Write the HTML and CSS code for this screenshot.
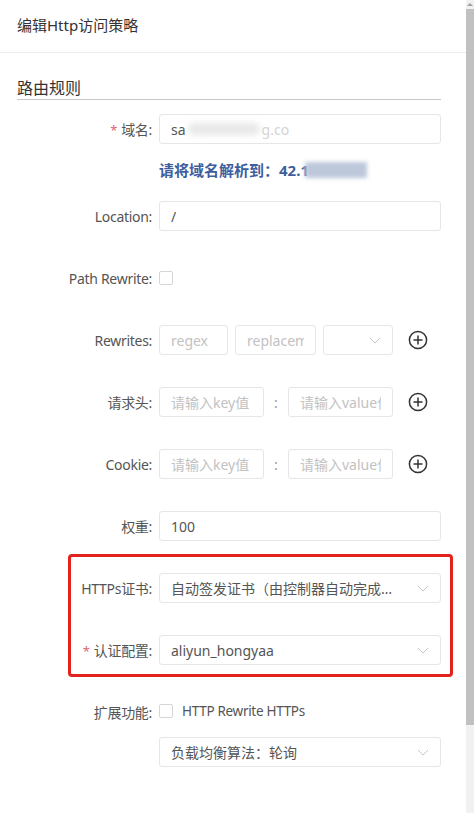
FILE: index.html
```html
<!DOCTYPE html>
<html lang="zh-CN">
<head>
    <meta charset="UTF-8">
    <meta name="viewport" content="width=device-width, initial-scale=1.0">
    <title>编辑Http访问策略</title>
    <link rel="stylesheet" href="styles.css">
</head>
<body>
    <div class="page">
        <div class="dialog">
            <!-- Header -->
            <header class="dialog-header">
                <h1 class="dialog-title">编辑Http访问策略</h1>
            </header>

            <!-- Route rules -->
            <h2 class="section-title">路由规则</h2>

            <form class="form">
                <div class="form-row">
                    <label class="form-label"><span class="required">*</span>域名:</label>
                    <div class="input">
                        <span class="value">sa</span><span class="masked"></span><span class="faint">g.co</span>
                    </div>
                </div>
                <div class="form-hint">请将域名解析到：42.1<span class="ip-mask"></span></div>

                <div class="form-row">
                    <label class="form-label">Location:</label>
                    <div class="input"><span class="value">/</span></div>
                </div>

                <div class="form-row">
                    <label class="form-label">Path Rewrite:</label>
                    <span class="checkbox"></span>
                </div>

                <div class="form-row">
                    <label class="form-label">Rewrites:</label>
                    <div class="input input-regex"><span class="placeholder">regex</span></div>
                    <div class="input input-replace"><span class="placeholder">replacement</span></div>
                    <div class="input select input-flag">
                        <span class="placeholder"></span>
                        <svg class="chevron" viewBox="0 0 12 7"><path d="M1 1l5 5 5-5"/></svg>
                    </div>
                    <svg class="add-btn" viewBox="0 0 20 20"><circle cx="10" cy="10" r="8.6"/><path d="M10 5.5v9M5.5 10h9"/></svg>
                </div>

                <div class="form-row">
                    <label class="form-label">请求头:</label>
                    <div class="input input-pair"><span class="placeholder">请输入key值</span></div>
                    <span class="pair-sep">:</span>
                    <div class="input input-pair"><span class="placeholder">请输入value值</span></div>
                    <svg class="add-btn" viewBox="0 0 20 20"><circle cx="10" cy="10" r="8.6"/><path d="M10 5.5v9M5.5 10h9"/></svg>
                </div>

                <div class="form-row">
                    <label class="form-label">Cookie:</label>
                    <div class="input input-pair"><span class="placeholder">请输入key值</span></div>
                    <span class="pair-sep">:</span>
                    <div class="input input-pair"><span class="placeholder">请输入value值</span></div>
                    <svg class="add-btn" viewBox="0 0 20 20"><circle cx="10" cy="10" r="8.6"/><path d="M10 5.5v9M5.5 10h9"/></svg>
                </div>

                <div class="form-row">
                    <label class="form-label">权重:</label>
                    <div class="input"><span class="value">100</span></div>
                </div>

                <!-- Certificate settings, outlined in red -->
                <div class="cert-group">
                    <div class="highlight"></div>
                    <div class="form-row">
                        <label class="form-label">HTTPs证书:</label>
                        <div class="input select">
                            <span class="value">自动签发证书（由控制器自动完成证书申请）</span>
                            <svg class="chevron" viewBox="0 0 12 7"><path d="M1 1l5 5 5-5"/></svg>
                        </div>
                    </div>
                    <div class="form-row">
                        <label class="form-label"><span class="required">*</span>认证配置:</label>
                        <div class="input select">
                            <span class="value">aliyun_hongyaa</span>
                            <svg class="chevron" viewBox="0 0 12 7"><path d="M1 1l5 5 5-5"/></svg>
                        </div>
                    </div>
                </div>

                <div class="form-row row-ext">
                    <label class="form-label">扩展功能:</label>
                    <span class="checkbox"></span>
                    <span class="checkbox-text">HTTP Rewrite HTTPs</span>
                </div>

                <div class="form-row row-sub">
                    <div class="input select">
                        <span class="value">负载均衡算法：轮询</span>
                        <svg class="chevron" viewBox="0 0 12 7"><path d="M1 1l5 5 5-5"/></svg>
                    </div>
                </div>
            </form>
        </div>

        <!-- Scrollbar -->
        <div class="scrollbar">
            <span class="scroll-arrow"></span>
            <div class="scroll-thumb"></div>
        </div>
    </div>
</body>
</html>
```

FILE: styles.css
```css
/* Reset and base styles */
* {
    margin: 0;
    padding: 0;
    box-sizing: border-box;
}

body {
    font-family: "Noto Sans", "Noto Sans CJK SC", sans-serif;
    background: #fff;
    color: #555;
    font-size: 14px;
}

.page {
    display: flex;
    height: 813px;
    overflow: hidden;
}

.dialog {
    width: 466px;
    flex-shrink: 0;
}

/* Header */
.dialog-header {
    height: 53px;
    border-bottom: 1px solid #ececec;
    padding: 14px 17px 0;
}

.dialog-title {
    font-size: 15px;
    font-weight: 400;
    color: #333;
    line-height: 22px;
}

.section-title {
    margin: 24px 25px 0 17px;
    font-size: 16px;
    font-weight: 400;
    color: #333;
    line-height: 22px;
    border-bottom: 1px solid #c8c8c8;
}

/* Form */
.form {
    padding: 14px 25px 0 0;
}

.form-row {
    display: flex;
    align-items: center;
    height: 30px;
    margin-bottom: 32px;
}

.form-label {
    width: 159px;
    flex-shrink: 0;
    padding-right: 7px;
    text-align: right;
    color: #555;
    white-space: nowrap;
    letter-spacing: -0.3px;
}

.required {
    color: #e0637a;
    margin-right: 4px;
    font-size: 13px;
}

.form-hint {
    margin: -18px 0 19px 159px;
    line-height: 24px;
    font-size: 15px;
    font-weight: 700;
    color: #3f5e9d;
}

.ip-mask {
    display: inline-block;
    width: 62px;
    height: 16px;
    vertical-align: -2px;
    margin-left: -4px;
    background: #bcc7da;
    filter: blur(2px);
}

.input {
    flex: 1;
    height: 30px;
    display: flex;
    align-items: center;
    padding: 0 11px;
    border: 1px solid #e6e6e6;
    border-radius: 3px;
    overflow: hidden;
    white-space: nowrap;
}

.value {
    color: #555;
    overflow: hidden;
    text-overflow: ellipsis;
}

.placeholder {
    color: #c2c2c2;
    overflow: hidden;
}

.masked {
    display: inline-block;
    width: 72px;
    height: 12px;
    margin: 0 2px;
    background: #e8e8e8;
    border-radius: 6px;
    filter: blur(3px);
}

.faint {
    color: #d4d4d4;
}

.select {
    justify-content: space-between;
}

.chevron {
    width: 12px;
    height: 7px;
    flex-shrink: 0;
    margin-left: 12px;
    fill: none;
    stroke: #c6c6c6;
    stroke-width: 1;
}

.input-regex {
    flex: 0 0 69px;
}

.input-replace {
    flex: 0 0 81px;
    margin-left: 7px;
}

.input-flag {
    flex: 0 0 70px;
    margin-left: 7px;
}

.input-pair {
    flex: 0 0 105px;
}

.pair-sep {
    width: 24px;
    text-align: center;
    color: #999;
}

.add-btn {
    width: 20px;
    height: 20px;
    margin-left: 15px;
    fill: none;
    stroke: #333;
    stroke-width: 1.5;
}

/* Checkbox */
.checkbox {
    width: 14px;
    height: 14px;
    border: 1px solid #d6d6d6;
    border-radius: 2px;
    background: #fff;
}

.row-ext {
    align-items: center;
    margin-bottom: 10px;
}

.row-ext .checkbox {
    margin-top: -3px;
}

.checkbox-text {
    margin-left: 9px;
    margin-top: -3px;
    color: #555;
    font-size: 13.5px;
    letter-spacing: -0.3px;
}

.row-sub {
    padding-left: 159px;
}

/* Red outline round the certificate fields */
.cert-group {
    position: relative;
    margin-bottom: 32px;
}

.cert-group .form-row:last-child {
    margin-bottom: 0;
}

.highlight {
    position: absolute;
    top: -19px;
    bottom: -12px;
    left: 68px;
    width: 385px;
    border: 3px solid #e3221c;
    border-radius: 4px;
    pointer-events: none;
}

/* Scrollbar */
.scrollbar {
    width: 8px;
    background: #f1f1f1;
    display: flex;
    flex-direction: column;
    align-items: center;
}

.scroll-arrow {
    width: 0;
    height: 0;
    margin: 3px 0 3px;
    border-left: 3px solid transparent;
    border-right: 3px solid transparent;
    border-bottom: 3px solid #a0a0a0;
}

.scroll-thumb {
    width: 8px;
    height: 716px;
    background: #c1c1c1;
}
```
